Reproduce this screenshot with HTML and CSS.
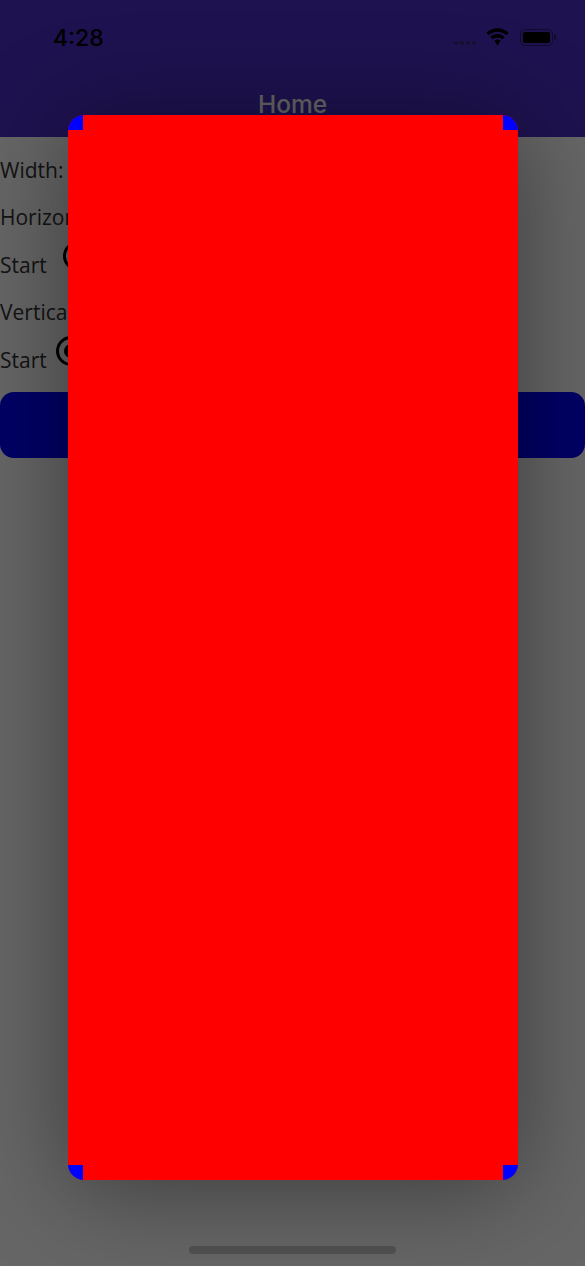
FILE: index.html
```html
<!DOCTYPE html>
<html lang="en">
<head>
    <meta charset="UTF-8">
    <title>Home</title>
    <link rel="stylesheet" href="styles.css">
</head>
<body>
<div class="screen">
    <div class="header">
        <div class="status-bar">
            <span class="time">4:28</span>
            <div class="status-icons">
                <div class="signal">
                    <i></i><i></i><i></i><i></i>
                </div>
                <svg class="wifi" width="25" height="18" viewBox="0 0 24 17">
                    <path d="M12 3.400c3.300 0 6.300 1.300 8.500 3.400l2.100-2.300C19.900 1.900 16.100.2 12 .2S4.100 1.900 1.400 4.500l2.100 2.300C5.700 4.700 8.700 3.400 12 3.400z"/>
                    <path d="M12 8.900c1.800 0 3.500.7 4.700 1.800l2.200-2.300C17.100 6.700 14.700 5.700 12 5.700S6.900 6.700 5.100 8.400l2.200 2.300C8.500 9.600 10.200 8.900 12 8.900z"/>
                    <path d="M12 11c-1.200 0-2.200.4-3 1.100l3 4.600 3-4.600c-.8-.7-1.800-1.100-3-1.100z"/>
                </svg>
                <div class="battery">
                    <div class="battery-level"></div>
                </div>
            </div>
        </div>
        <div class="title">Home</div>
    </div>

    <div class="content">
        <div class="label-row">Width:</div>
        <div class="label-row">Horizontal</div>
        <div class="radio-row first">
            <span>Start</span>
            <span class="radio"></span>
        </div>
        <div class="label-row">Vertical</div>
        <div class="radio-row second">
            <span>Start</span>
            <span class="radio checked"></span>
        </div>
        <div class="show-button"></div>
    </div>

    <div class="overlay">
        <div class="modal">
            <i class="corner top-left"></i>
            <i class="corner top-right"></i>
            <i class="corner bottom-left"></i>
            <i class="corner bottom-right"></i>
        </div>
        <div class="home-indicator"></div>
    </div>
</div>
</body>
</html>
```

FILE: styles.css
```css
* {
    box-sizing: border-box;
}

body {
    margin: 0;
    background: #fff;
    font-family: 'Open Sans', sans-serif;
    color: #000;
}

.screen {
    position: relative;
    width: 585px;
    height: 1266px;
    overflow: hidden;
}

.header {
    height: 137px;
    background: #4d2fc8;
}

.status-bar {
    display: flex;
    justify-content: space-between;
    align-items: center;
    height: 74px;
    padding: 0 32px 0 53px;
}

.time {
    padding-top: 1px;
    font-family: Inter, sans-serif;
    font-size: 23px;
    font-weight: 500;
    color: #000;
}

.status-icons {
    display: flex;
    align-items: center;
    gap: 10px;
}

.signal {
    display: flex;
    gap: 2px;
    margin-top: 12px;
    margin-right: -1px;
}

.signal i {
    width: 4px;
    height: 4px;
    border-radius: 50%;
    background: #3a2c78;
}

.battery {
    position: relative;
    width: 33px;
    height: 17px;
    padding: 2px;
    border: 1px solid #2c1f66;
    border-radius: 5px;
}

.battery::after {
    content: "";
    position: absolute;
    top: 4px;
    right: -4px;
    width: 2px;
    height: 6px;
    border-radius: 0 2px 2px 0;
    background: #2c1f66;
}

.battery-level {
    height: 100%;
    background: #000;
    border-radius: 2px;
}

.title {
    margin-top: 14px;
    text-align: center;
    font-family: Inter, sans-serif;
    font-size: 24.5px;
    font-weight: 500;
    line-height: 32px;
    color: #fff;
}

.content {
    padding-top: 1px;
    font-size: 21px;
    line-height: 27px;
    color: #333;
}

.label-row {
    padding-top: 19px;
    padding-bottom: 1px;
}

.radio-row {
    display: flex;
    height: 48px;
    padding-top: 20px;
}

.radio-row.first {
    gap: 16px;
}

.radio-row.second {
    gap: 9px;
}

.radio {
    flex: none;
    display: flex;
    align-items: center;
    justify-content: center;
    width: 30px;
    height: 30px;
    margin-top: -11px;
    border: 3px solid #000;
    border-radius: 50%;
}

.radio.checked::after {
    content: "";
    width: 14px;
    height: 14px;
    border-radius: 50%;
    background: #000;
}

.show-button {
    height: 66px;
    margin-top: 17px;
    background: #00f;
    border-radius: 14px;
}

.overlay {
    position: absolute;
    top: 0;
    left: 0;
    width: 100%;
    height: 100%;
    background: rgba(0, 0, 0, 0.6);
}

.modal {
    position: absolute;
    top: 115px;
    left: 68px;
    width: 450px;
    height: 1065px;
    background: #f00;
    border-radius: 16px;
    overflow: hidden;
    box-shadow: 0 8px 100px rgba(0, 0, 0, 0.42);
}

.corner {
    position: absolute;
    width: 15px;
    height: 15px;
    background: #00f;
}

.top-left {
    top: 0;
    left: 0;
}

.top-right {
    top: 0;
    right: 0;
}

.bottom-left {
    bottom: 0;
    left: 0;
}

.bottom-right {
    bottom: 0;
    right: 0;
}

.home-indicator {
    position: absolute;
    left: 189px;
    bottom: 12px;
    width: 207px;
    height: 8px;
    border-radius: 4px;
    background: rgba(0, 0, 0, 0.2);
}
```
